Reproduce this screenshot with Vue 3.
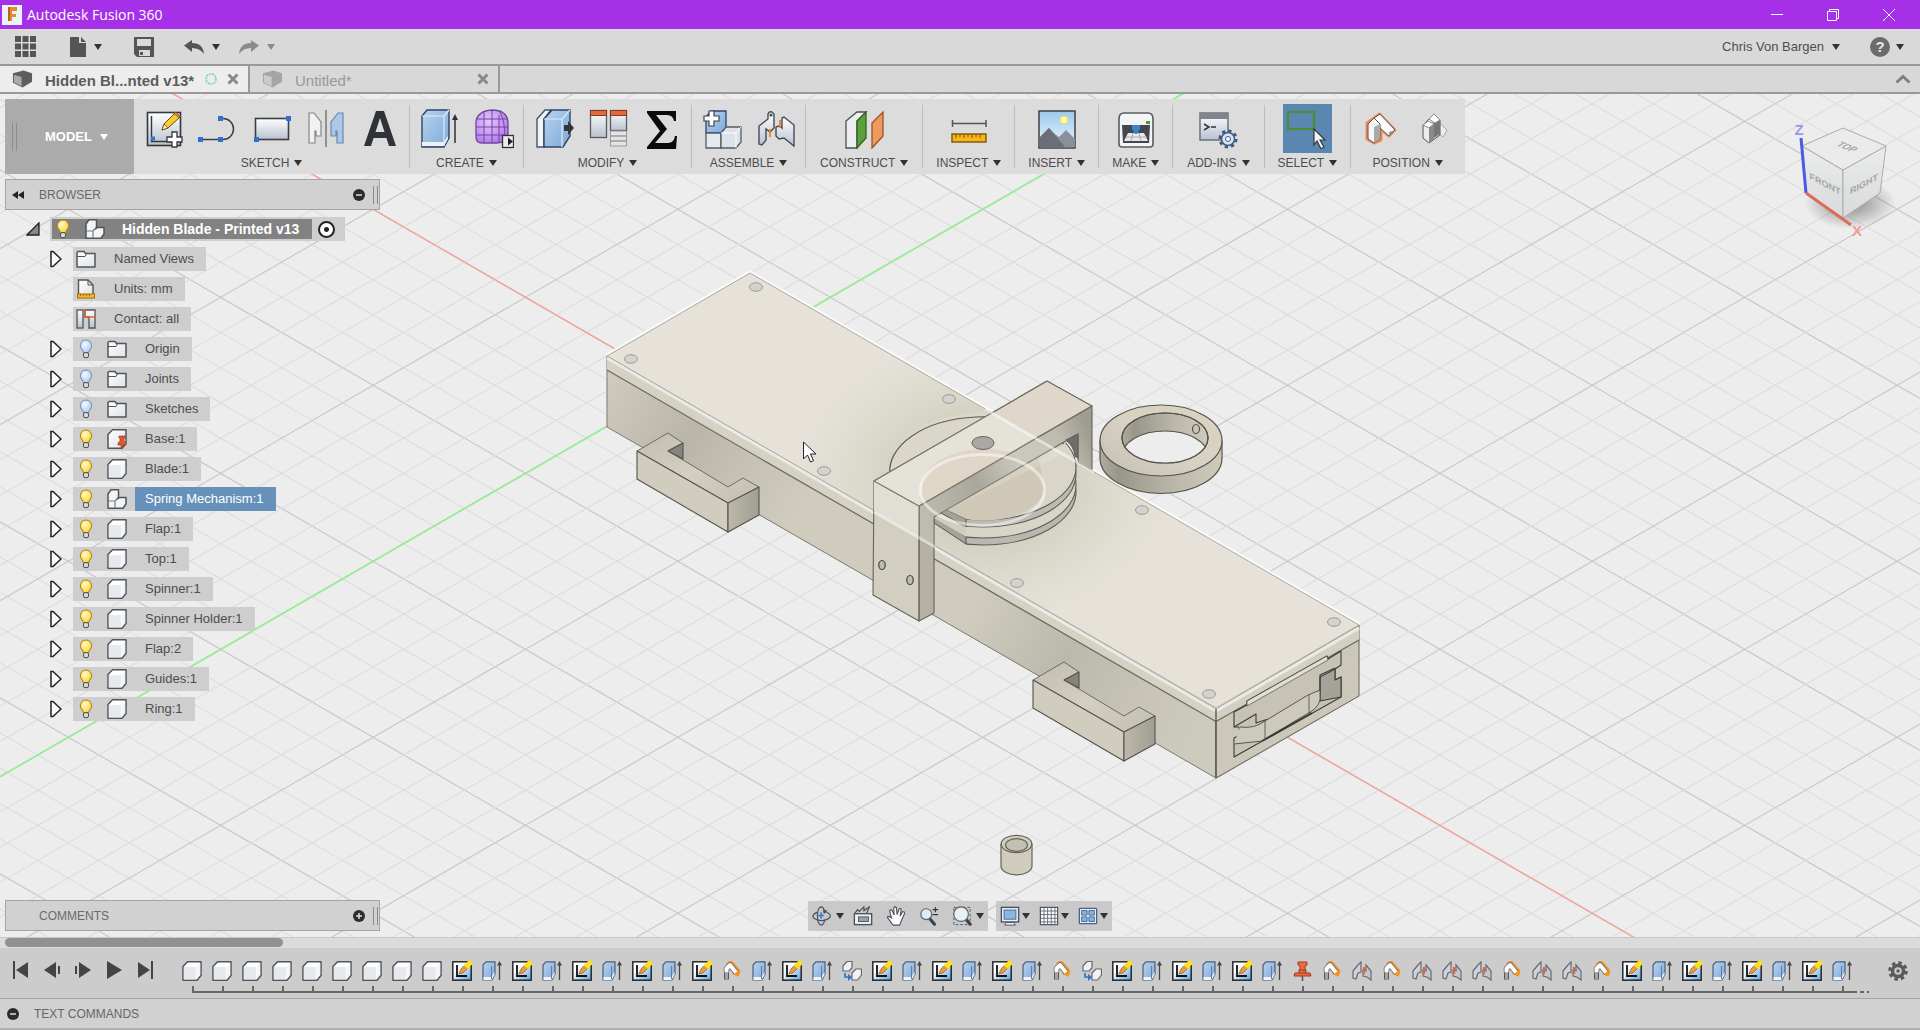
<script setup>
const groups = [
  { label: 'SKETCH', icons: ['sketch', 'line', 'rect', 'mirror', 'text'] },
  { label: 'CREATE', icons: ['extrude', 'form'] },
  { label: 'MODIFY', icons: ['presspull', 'params', 'sigma'] },
  { label: 'ASSEMBLE', icons: ['component', 'joint'] },
  { label: 'CONSTRUCT', icons: ['plane'], roomy: true },
  { label: 'INSPECT', icons: ['measure'] },
  { label: 'INSERT', icons: ['picture'] },
  { label: 'MAKE', icons: ['printer'] },
  { label: 'ADD-INS', icons: ['addins'], roomy: true },
  { label: 'SELECT', icons: ['select'], active: true },
  { label: 'POSITION', icons: ['capture', 'revert'] },
]

const tree = [
  { name: 'Named Views', icon: 'folder', arrow: true },
  { name: 'Units: mm', icon: 'units' },
  { name: 'Contact: all', icon: 'contact' },
  { name: 'Origin', icon: 'folder', arrow: true, bulb: 'off' },
  { name: 'Joints', icon: 'folder', arrow: true, bulb: 'off' },
  { name: 'Sketches', icon: 'folder', arrow: true, bulb: 'off' },
  { name: 'Base:1', icon: 'pinned', arrow: true, bulb: 'on' },
  { name: 'Blade:1', icon: 'body', arrow: true, bulb: 'on' },
  { name: 'Spring Mechanism:1', icon: 'assembly', arrow: true, bulb: 'on', selected: true },
  { name: 'Flap:1', icon: 'body', arrow: true, bulb: 'on' },
  { name: 'Top:1', icon: 'body', arrow: true, bulb: 'on' },
  { name: 'Spinner:1', icon: 'body', arrow: true, bulb: 'on' },
  { name: 'Spinner Holder:1', icon: 'body', arrow: true, bulb: 'on' },
  { name: 'Flap:2', icon: 'body', arrow: true, bulb: 'on' },
  { name: 'Guides:1', icon: 'body', arrow: true, bulb: 'on' },
  { name: 'Ring:1', icon: 'body', arrow: true, bulb: 'on' },
]

const featureIcons = { B: 'body', S: 't-sketch', E: 't-extrude', J: 't-joint', M: 't-move', A: 't-asbuilt', P: 't-pin' }
const features = [...'BBBBBBBBBSESESESESJESEMSESESEJMSESESEPJAJAAAJAAJSESESESE'].map((k) => featureIcons[k])

const playback = [
  { id: 'first', label: 'Go to start' },
  { id: 'prev', label: 'Step back' },
  { id: 'next', label: 'Step forward' },
  { id: 'play', label: 'Play' },
  { id: 'last', label: 'Go to end' },
]

const navTools = [
  [
    { id: 'orbit', menu: true },
    { id: 'lookat' },
    { id: 'pan' },
    { id: 'zoom' },
    { id: 'fit', menu: true },
  ],
  [
    { id: 'display', menu: true },
    { id: 'gridset', menu: true },
    { id: 'views', menu: true },
  ],
]

// Ground grid: two line families at 30 degrees, every fifth line is a major one.
const slope = 88 / 152.4
const pitch = 35.2
const x0 = 220.7
const y0 = 297.3
function family(sign) {
  const lines = []
  for (let n = -50; n <= 60; n++) {
    const y = y0 + n * pitch
    lines.push({
      major: n % 5 === 0,
      n,
      y1: y - sign * slope * x0,
      y2: y + sign * slope * (1920 - x0),
    })
  }
  return lines
}
const down = family(1)
const up = family(-1)
const gridLines = [...down, ...up]
const redAxis = down.find((l) => l.n === -5)
const greenAxis = up.find((l) => l.n === 10)

const screws = [
  [756, 287], [631, 359], [949, 399], [824, 471],
  [1142, 510], [1017, 583], [1334, 622], [1209, 694],
]
</script>

<template>
  <div class="app">
    <svg class="defs" width="0" height="0" aria-hidden="true">
      <defs>
        <linearGradient id="gBlue" x1="0" y1="0" x2="1" y2="1">
          <stop offset="0" stop-color="#b9d3ee" /><stop offset="1" stop-color="#7ea9d8" />
        </linearGradient>
        <linearGradient id="gGrey" x1="0" y1="0" x2="0" y2="1">
          <stop offset="0" stop-color="#fff" /><stop offset="1" stop-color="#b9c2cf" />
        </linearGradient>
        <linearGradient id="gBody" x1="0" y1="0" x2="1" y2="1">
          <stop offset="0" stop-color="#fff" /><stop offset="1" stop-color="#dfe2e6" />
        </linearGradient>
        <linearGradient id="gSky" x1="0" y1="0" x2="0" y2="1">
          <stop offset="0" stop-color="#9cc8ec" /><stop offset="1" stop-color="#eef6fb" />
        </linearGradient>
        <linearGradient id="gSheet" x1="0" y1="0" x2="1" y2="1">
          <stop offset="0.3" stop-color="#fff" /><stop offset="1" stop-color="#5ea1e0" />
        </linearGradient>
        <radialGradient id="gPurple" cx="0.4" cy="0.35" r="0.7">
          <stop offset="0" stop-color="#e6c6ff" /><stop offset="1" stop-color="#b377ef" />
        </radialGradient>
        <radialGradient id="gOn" cx="0.4" cy="0.35" r="0.7">
          <stop offset="0" stop-color="#fffbd0" /><stop offset="1" stop-color="#f8d52c" />
        </radialGradient>
        <radialGradient id="gOff" cx="0.4" cy="0.35" r="0.7">
          <stop offset="0" stop-color="#f4faff" /><stop offset="1" stop-color="#a9c8f0" />
        </radialGradient>
      </defs>

      <!-- toolbar, 40 x 40 -->
      <symbol id="sketch" viewBox="0 0 40 40">
        <rect x="3.5" y="3.5" width="33" height="33" fill="url(#gGrey)" stroke="#34383e" stroke-width="1.6" />
        <path d="M7.500 7V32.500H32" fill="none" stroke="#34383e" stroke-width="1.400" />
        <rect x="7" y="27.500" width="4" height="4" fill="#2f74d0" />
        <path d="M18 21l2-6L31 4l5 4L24 19z" fill="#ffc928" stroke="#5b4a1e" />
        <path d="M18 21l2-6 4 4z" fill="#f6e7c4" stroke="#5b4a1e" stroke-width=".7" />
        <path d="M30 4.500l1.500-1.500 5 4-1.500 1.700z" fill="#ef8a3c" stroke="#5b4a1e" stroke-width=".7" />
        <path d="M28 23h5v5h5v5h-5v5h-5v-5h-5v-5h5z" fill="#fff" stroke="#34383e" stroke-width="1.300" />
      </symbol>
      <symbol id="line" viewBox="0 0 40 40">
        <path d="M3 30.500H25A10.500 10.500 0 0 0 25 9.500H23" fill="none" stroke="#3b3f45" stroke-width="1.500" />
        <g fill="#2f6fd2"><rect x="0" y="28" width="5" height="5" /><rect x="20" y="28" width="5" height="5" /><rect x="20" y="7" width="5" height="5" /></g>
      </symbol>
      <symbol id="rect" viewBox="0 0 40 40">
        <rect x="3.500" y="9.500" width="33" height="21" fill="url(#gGrey)" stroke="#3b3f45" stroke-width="1.600" />
        <g fill="#2f6fd2"><rect x="2" y="28" width="5" height="5" /><rect x="34" y="7" width="5" height="5" /></g>
      </symbol>
      <symbol id="mirror" viewBox="0 0 40 40">
        <path d="M20 1V38" stroke="#777" stroke-width="1.500" />
        <path d="M3 4h5l7 9v14h-5v-5H9v12H3z" fill="#f1f1f1" stroke="#858585" stroke-width="1.200" />
        <path d="M37 4h-5l-7 9v14h5v-5h1v12h6z" fill="#a9c8ea" stroke="#6e88a8" stroke-width="1.200" />
      </symbol>
      <symbol id="text" viewBox="0 0 40 40">
        <path d="M4 37L16 2h8l12 35h-7l-2.600-8H13.600L11 37zM15.500 23h9L20 9z" fill="#2f3237" />
      </symbol>
      <symbol id="extrude" viewBox="0 0 40 40">
        <path d="M2 7l5-6h22v28l-5 9H2z" fill="url(#gBlue)" stroke="#2c4568" stroke-width="1.400" />
        <path d="M2 33h22l4-6v3l-4 7H2z" fill="#eef2f6" />
        <path d="M2 7h22v30M24 7l5-6" fill="none" stroke="#dcebfa" stroke-width="1.200" />
        <path d="M35 34V8" stroke="#2e3238" stroke-width="1.500" /><path d="M35 5l3 6h-6z" fill="#2e3238" />
      </symbol>
      <symbol id="form" viewBox="0 0 40 40">
        <path d="M2 12Q4 2 18 1Q32 1 34 12V28Q31 34 22 34H8Q2 34 2 28z" fill="url(#gPurple)" stroke="#71479c" stroke-width="1.300" />
        <path d="M10 4V34M18 1V33M25 6V33M2 18H34M2 26H33M3 10H33M26 3Q31 12 31 30" fill="none" stroke="#71479c" />
        <rect x="28.500" y="26.500" width="11" height="12" fill="#ececec" stroke="#333" stroke-width="1.300" />
        <path d="M30 32.500h4v-4l5 4-5 4v-4" fill="#222" />
      </symbol>
      <symbol id="presspull" viewBox="0 0 40 40">
        <path d="M3 10l8-9h6L10 10V38H3z" fill="#f1f3f5" stroke="#43546b" stroke-width="1.400" />
        <path d="M10 10l8-9h18v26l-7 11H10z" fill="url(#gBlue)" stroke="#2c4568" stroke-width="1.400" />
        <path d="M10 10h18v28M28 10l8-9" fill="none" stroke="#dcebfa" stroke-width="1.200" />
        <path d="M30 16h4v-4l6 7-6 7v-4h-4z" fill="#33363b" />
      </symbol>
      <symbol id="params" viewBox="0 0 40 40">
        <rect x="2.500" y="1.500" width="16" height="27" fill="url(#gGrey)" stroke="#555b64" stroke-width="1.300" />
        <rect x="22.500" y="1.500" width="16" height="20" fill="url(#gGrey)" stroke="#555b64" stroke-width="1.300" />
        <path d="M2.500 1.500h16v5h-16zM22.500 1.500h16v5h-16z" fill="#e4683a" stroke="#8c3a1b" />
        <path d="M22.500 22h16v5h-16zM22.500 27h16v5h-16zM22.500 32h16v5h-16z" fill="#e3e3e3" stroke="#999" />
      </symbol>
      <symbol id="sigma" viewBox="0 0 40 40">
        <path d="M5 2H34V12H32Q31 6 25 6H14L25 20L13 34H26Q32 34 33 27H35L34 40H5V38L18 22L5 4z" fill="#0b0b0b" />
      </symbol>
      <symbol id="component" viewBox="0 0 40 40">
        <path d="M4 8l5-6h15v17l-5 5H4z" fill="url(#gBlue)" stroke="#2c4568" stroke-width="1.300" />
        <path d="M4 24h15v15H4z" fill="#e6e9ee" stroke="#555b66" stroke-width="1.300" />
        <path d="M19 24l5-6h15v15l-5 6H19z" fill="#dde1e8" stroke="#555b66" stroke-width="1.300" />
        <path d="M19 24h15v15M34 24l5-6" fill="none" stroke="#fff" />
        <path d="M7 2h5v5h5v5h-5v5H7v-5H2V7h5z" fill="#fff" stroke="#3c4350" stroke-width="1.200" />
      </symbol>
      <symbol id="joint" viewBox="0 0 40 40">
        <path d="M3 17l9-7V5q1-3 4-2l2 2v14l-4 4-4-3v11l-4 5-3-1z" fill="url(#gGrey)" stroke="#454b54" stroke-width="1.400" />
        <path d="M26 19V9l2-1 10 8v21l-10-8-5 1-3-3V18q3-2 6 1z" fill="url(#gGrey)" stroke="#454b54" stroke-width="1.400" />
        <circle cx="15" cy="6" r="1.600" fill="#454b54" />
        <path d="M14 20v8M24 11v8" stroke="#ef8025" stroke-width="1.800" />
      </symbol>
      <symbol id="plane" viewBox="0 0 40 40">
        <path d="M2 12L13 3h9L13 12V39H2z" fill="#eceef0" stroke="#4a4f57" stroke-width="1.300" />
        <path d="M13 12l9-9V29l-9 10z" fill="#5aa03c" stroke="#35611f" stroke-width="1.300" />
        <path d="M28 14L39 3V27L28 39z" fill="#f0995c" stroke="#9a5324" stroke-width="1.300" />
      </symbol>
      <symbol id="measure" viewBox="0 0 40 40">
        <path d="M3 14.500H37M3.500 11v7M37 11v7" fill="none" stroke="#555" stroke-width="1.500" />
        <rect x="3" y="25" width="34" height="8" fill="#f7b51c" stroke="#7c5606" stroke-width="1.400" />
        <path d="M7 25v4M11 25v3M15 25v4M19 25v3M23 25v4M27 25v3M31 25v4" stroke="#7c5606" />
      </symbol>
      <symbol id="picture" viewBox="0 0 40 40">
        <rect x="2" y="2" width="36" height="37" fill="url(#gSky)" stroke="#3d4248" stroke-width="1.500" />
        <circle cx="27" cy="11" r="4" fill="#fbf8b0" stroke="#e5d955" />
        <path d="M3 28l9-9 6 6 4 3 7-7 9 9v8H3z" fill="#8a8f9a" />
        <path d="M3 28l9-9 16 19H3z" fill="#696e79" />
      </symbol>
      <symbol id="printer" viewBox="0 0 40 40">
        <path d="M3 10q0-6 5-6H32q5 0 5 6V35q0 3-3 3H6q-3 0-3-3z" fill="#f3f4f5" stroke="#585c62" stroke-width="1.600" />
        <path d="M6 16H34L33 34H7z" fill="#42464d" />
        <path d="M12 24H28L32 32H8z" fill="#e8e8e8" /><path d="M17 24l-2 8M23 24l2 8M10 28h21" stroke="#aaa" />
        <path d="M16 16h8v4l-3 5h-2l-3-5z" fill="#3f80c8" /><rect x="30" y="12" width="4" height="3" fill="#4c9b2c" />
      </symbol>
      <symbol id="addins" viewBox="0 0 40 40">
        <rect x="2" y="4" width="28" height="27" fill="url(#gGrey)" stroke="#666b72" stroke-width="1.400" />
        <rect x="2" y="4" width="28" height="6" fill="#7e858d" />
        <path d="M6 15l5 3-5 3M13 18h5" fill="none" stroke="#333" stroke-width="1.500" />
        <circle cx="30" cy="30" r="6.500" fill="#dbe5f2" stroke="#3b5a86" stroke-width="1.500" />
        <circle cx="30" cy="30" r="8" fill="none" stroke="#3b5a86" stroke-width="3" stroke-dasharray="3.200 3.080" />
        <circle cx="30" cy="30" r="2.500" fill="#fff" stroke="#3b5a86" />
      </symbol>
      <symbol id="select" viewBox="0 0 40 40">
        <rect x="1" y="3" width="26" height="17" fill="none" stroke="#4a8f2e" stroke-width="2.200" />
        <path d="M27 20l11 11h-5l4 7-3 2-4-8-3 4z" fill="#f4f4f4" stroke="#2e3742" stroke-width="1.200" />
      </symbol>
      <symbol id="capture" viewBox="0 0 40 40">
        <path d="M6 14L18.500 5L34 21L28 27L20 20V31L13 34L6 30z" fill="none" stroke="#f08a52" stroke-width="3" stroke-linejoin="round" />
        <path d="M13 9l6-4L34 21l-6 6L19 19z" fill="#fafafa" stroke="#555" />
        <path d="M7 15l6-6 6 6v15l-6 4-6-4z" fill="#f6f6f6" stroke="#555" />
        <path d="M13 18l6-3v15l-6 4z" fill="#a9a9a9" /><path d="M28 23l6-2-6 6z" fill="#999" />
      </symbol>
      <symbol id="revert" viewBox="0 0 40 40">
        <path d="M18 8l14 13-4 7-9-7z" fill="#eee" stroke="#aaa" />
        <path d="M8 16L19 5l6 6v15L14 34l-6-5z" fill="#ececec" stroke="#555" />
        <path d="M14 18l5-5v17l-5 4z" fill="#8a8a8a" /><path d="M19 13l6-3v15l-6 4z" fill="#777" />
        <path d="M8 16l5-4 6 3-5 4zM14 10l5-5 6 6-5 3z" fill="#fff" stroke="#888" />
      </symbol>

      <!-- browser and timeline, 20 x 20 -->
      <symbol id="body" viewBox="0 0 20 20">
        <path d="M1 5.500L5.500 .8H19V14.500L15 19.200H1z" fill="#fff" stroke="#50545b" stroke-width="1.500" stroke-linejoin="round" />
        <path d="M1.800 6H14V18.400H1.800z" fill="#e6eaee" /><path d="M14.500 6V18L18.200 14V2z" fill="#f3f4f6" />
      </symbol>
      <symbol id="assembly" viewBox="0 0 20 20">
        <path d="M1 5L4 .8h7.500V8l-1 2 2-1.500H19V15l-3 4.200H1z" fill="#f3f4f6" stroke="#50545b" stroke-width="1.500" stroke-linejoin="round" />
        <path d="M8 19V12l3-3.500M1.500 12H8" fill="none" stroke="#777c84" stroke-width="1.200" />
      </symbol>
      <symbol id="pinned" viewBox="0 0 20 20">
        <path d="M1 5.500L5.500 .8H19V14.500L15 19.200H1z" fill="url(#gBody)" stroke="#50545b" stroke-width="1.500" stroke-linejoin="round" />
        <path d="M12 7h6v2h-1v3l2 2v2h-3v3h-2v-3h-3v-2l2-2V9h-1z" fill="#e2572b" stroke="#8e2d10" stroke-width=".6" />
      </symbol>
      <symbol id="folder" viewBox="0 0 20 20">
        <path d="M1 18V3.500L2 2.500H8l1.500 2H19V18z" fill="url(#gBody)" stroke="#50545b" stroke-width="1.500" stroke-linejoin="round" />
        <path d="M1 7.500h8l1.500-2.500" fill="none" stroke="#50545b" />
      </symbol>
      <symbol id="units" viewBox="0 0 20 20">
        <path d="M2.500 16V1H12l5 5V16z" fill="url(#gBody)" stroke="#50545b" stroke-width="1.400" /><path d="M12 1v5h5" fill="none" stroke="#50545b" />
        <rect x="1.500" y="15" width="17" height="4" fill="#f9b822" stroke="#a3690b" />
        <path d="M4.500 15v2M7.500 15v2M10.500 15v2M13.500 15v2" stroke="#a3690b" />
      </symbol>
      <symbol id="contact" viewBox="0 0 20 20">
        <rect x="1" y="1" width="6" height="18" fill="url(#gGrey)" stroke="#50545b" stroke-width="1.300" />
        <path d="M9 1h10v18h-6V8H9z" fill="url(#gGrey)" stroke="#50545b" stroke-width="1.300" />
        <path d="M9 0V8H20" fill="none" stroke="#f05d31" stroke-width="1.500" />
      </symbol>
      <symbol id="bulb-on" viewBox="0 0 20 20">
        <path d="M10 1a5.700 5.700 0 0 1 4 9.600l-1.500 3H7.500l-1.500-3A5.700 5.700 0 0 1 10 1z" fill="url(#gOn)" stroke="#b98a1d" stroke-width="1.100" />
        <rect x="7.500" y="13.600" width="5" height="5" rx="1.500" fill="#d8dadd" stroke="#4b4f55" />
      </symbol>
      <symbol id="bulb-off" viewBox="0 0 20 20">
        <path d="M10 1a5.700 5.700 0 0 1 4 9.600l-1.500 3H7.500l-1.500-3A5.700 5.700 0 0 1 10 1z" fill="url(#gOff)" stroke="#7d98bd" stroke-width="1.100" />
        <rect x="7.500" y="13.600" width="5" height="5" rx="1.500" fill="#d8dadd" stroke="#4b4f55" />
      </symbol>
      <symbol id="t-sketch" viewBox="0 0 20 20">
        <rect x=".8" y=".8" width="18.400" height="18.400" fill="url(#gSheet)" stroke="#26292e" stroke-width="1.500" />
        <path d="M5 4V15H15" fill="none" stroke="#111" stroke-width="1.800" />
        <path d="M7 13l2-5 8-8 4 2-10 10z" fill="#e99a3e" stroke="#6a4313" stroke-width=".5" />
        <path d="M12 4.500L17 -1l5 2-6 7z" fill="#ffe11a" />
      </symbol>
      <symbol id="t-extrude" viewBox="0 0 20 20">
        <path d="M1 4l3-3.200h9V13l-3 6H1z" fill="url(#gBlue)" stroke="#4a607e" stroke-width="1.200" />
        <path d="M1.500 16h8l3-5v3l-3 5h-8z" fill="#f2f5f8" /><path d="M9.500 5v13" stroke="#5c7da8" />
        <path d="M17.500 19V3" stroke="#44474c" stroke-width="1.300" /><path d="M17.500 0l2.500 4.500h-5z" fill="#44474c" />
      </symbol>
      <symbol id="t-joint" viewBox="0 0 20 20">
        <g fill="none" stroke-linejoin="round">
          <path d="M6 5L8.500 3L15 10.500L13.500 14.500" stroke="#f39322" stroke-width="6.500" />
          <path d="M4.500 11V7.500L8 4L14 11.500" stroke="#666" stroke-width="5.500" />
          <path d="M4.500 9V18.500" stroke="#555" stroke-width="5" />
          <path d="M4.500 12V18" stroke="#a5a5a5" stroke-width="3" />
          <path d="M4.500 11.500V7.500L8 4L14 11.500" stroke="#fff" stroke-width="4" />
        </g>
      </symbol>
      <symbol id="t-move" viewBox="0 0 20 20">
        <path d="M1 5l4-4.500h5V7l-3 3H1zM10 12l4-4h5.500v6l-4 5H10z" fill="#f0f1f3" stroke="#666" stroke-width="1.200" />
        <path d="M3 12v4h4" fill="none" stroke="#2c75cf" stroke-width="1.700" /><path d="M6 13l4 3-4 4z" fill="#2c75cf" />
      </symbol>
      <symbol id="t-asbuilt" viewBox="0 0 20 20">
        <path d="M1 10l5-6 3-3v10l-3 1-2 6-3-1z" fill="#cfd2d8" stroke="#666b74" stroke-width="1.200" />
        <path d="M14 4l5 6v9l-4-3-4-1V9l3 1z" fill="#c3c7ce" stroke="#666b74" stroke-width="1.200" />
        <path d="M12 6v7" stroke="#e8632a" stroke-width="2" />
      </symbol>
      <symbol id="t-pin" viewBox="0 0 20 20">
        <path d="M6 1h9v3l-2 1v3l1 1v3h4l1 3H2l1-3h4V9l1-1V5L6 4z" fill="#e56a48" stroke="#a33a1b" /><path d="M7 9h7M7 12h7" stroke="#a33a1b" /><path d="M10.500 15v5" stroke="#555" stroke-width="1.500" />
      </symbol>

      <!-- playback, 18 x 18 -->
      <symbol id="first" viewBox="0 0 18 18"><path d="M2 0v18" stroke="#444" stroke-width="2" /><path d="M16 1v16L4 9z" fill="#444" /></symbol>
      <symbol id="prev" viewBox="0 0 18 18"><path d="M13 1v16L1 9z" fill="#444" /><path d="M16 5v8" stroke="#444" stroke-width="2" /></symbol>
      <symbol id="next" viewBox="0 0 18 18"><path d="M5 1v16L17 9z" fill="#444" /><path d="M2 5v8" stroke="#444" stroke-width="2" /></symbol>
      <symbol id="play" viewBox="0 0 18 18"><path d="M2 0v18L17 9z" fill="#444" /></symbol>
      <symbol id="last" viewBox="0 0 18 18"><path d="M2 1v16L14 9z" fill="#444" /><path d="M16 0v18" stroke="#444" stroke-width="2" /></symbol>

      <!-- navigation bar, 22 x 22 -->
      <symbol id="orbit" viewBox="0 0 22 22">
        <path d="M14 7Q13 1 10 1Q6 2 6 11Q6 20 10 21Q13 21 14 15" fill="none" stroke="#4a5260" stroke-width="1.300" />
        <path d="M14 6Q21 8 20 12Q17 16 10 16Q1 15 1 11Q2 8 6 7" fill="none" stroke="#4a5260" stroke-width="1.300" />
        <path d="M12 4l5 1-4 4z" fill="#4a5260" /><path d="M10 7v7M7 10.500h6" stroke="#2f78d0" stroke-width="1.600" />
      </symbol>
      <symbol id="lookat" viewBox="0 0 22 22">
        <path d="M2 8l3-4 2 2 5-5v4l6-4-3 7" fill="none" stroke="#4a5260" stroke-width="1.300" />
        <rect x="1.500" y="8.500" width="19" height="12" fill="#eef0f3" stroke="#4a5260" stroke-width="1.500" /><rect x="6" y="12" width="11" height="5" fill="#9ba0aa" stroke="#4a5260" />
      </symbol>
      <symbol id="pan" viewBox="0 0 22 22">
        <path d="M7 20L1.500 12.500Q2 10 6 13L4 5.500Q5 3 7 5.500L9 10 8.500 2Q10 0 11.500 2l.7 7.500L14.500 3q2-1 2.200 1L15.500 11l3-5q2 0 2 2L17 16l-2 5H8z" fill="#fcfcfc" stroke="#4a5260" stroke-width="1.200" />
      </symbol>
      <symbol id="zoom" viewBox="0 0 22 22">
        <path d="M11 13l6 7" stroke="#3c4249" stroke-width="3.500" stroke-linecap="round" />
        <circle cx="8" cy="9" r="6" fill="#dcebf6" stroke="#5d6672" stroke-width="1.300" /><path d="M15 4h6M18 1v6M15 9.500h6" stroke="#333" stroke-width="1.200" />
      </symbol>
      <symbol id="fit" viewBox="0 0 22 22">
        <rect x="2" y="1.500" width="18" height="19" fill="none" stroke="#555" stroke-dasharray="3 2" />
        <path d="M15 14l5 6" stroke="#3c4249" stroke-width="3.500" stroke-linecap="round" /><circle cx="10" cy="9" r="8" fill="#e6f0f5" stroke="#5d6672" stroke-width="1.300" />
      </symbol>
      <symbol id="display" viewBox="0 0 22 22">
        <path d="M7 18h8l2 3H5z" fill="#eee" stroke="#4a5260" /><rect x="1.500" y="1.500" width="19" height="16" fill="#eceff3" stroke="#4a5260" stroke-width="1.500" />
        <rect x="4.500" y="4.500" width="13" height="10" fill="#8db5e2" stroke="#44668f" />
      </symbol>
      <symbol id="gridset" viewBox="0 0 22 22">
        <rect x="1.500" y="1.500" width="19" height="19" fill="#fff" stroke="#4a5260" stroke-width="1.300" />
        <path d="M5.500 2v19M9.500 2v19M13.500 2v19M17.500 2v19M2 5.500h19M2 9.500h19M2 13.500h19M2 17.500h19" stroke="#616976" />
      </symbol>
      <symbol id="views" viewBox="0 0 22 22">
        <rect x="1.500" y="2.500" width="19" height="17" rx="1" fill="#e8eef5" stroke="#46618a" stroke-width="1.400" />
        <path d="M4 5h6v5H4zM12 5h6v5h-6zM4 12h6v5H4zM12 12h6v5h-6z" fill="#8db5e2" stroke="#46618a" />
      </symbol>

      <!-- document cube, 22 x 20 -->
      <symbol id="doc-dark" viewBox="0 0 22 20"><path d="M1 4L12 1l9 3v9l-10 6L1 14z" fill="#5d5d5d" /><path d="M2 5.500l8 2.500v9.500L2 13.500z" fill="#a9a9a9" /></symbol>
      <symbol id="doc-light" viewBox="0 0 22 20"><path d="M1 4L12 1l9 3v9l-10 6L1 14z" fill="#a5a5a5" /><path d="M2 5.500l8 2.500v9.500L2 13.500z" fill="#cbcbcb" /></symbol>
      <symbol id="close" viewBox="0 0 12 12"><path d="M1.500 1.500l9 9M10.500 1.500l-9 9" stroke="#8a8a8a" stroke-width="3" /></symbol>
    </svg>

    <header class="titlebar">
      <svg class="logo" viewBox="0 0 20 20" aria-hidden="true">
        <rect width="20" height="20" fill="#e9f4f8" /><path d="M6 2h9v4h-5v3h4v3h-4v4H6z" fill="#e58a2d" /><path d="M6 2h2v14H6z" fill="#b9651a" />
      </svg>
      <span class="title">Autodesk Fusion 360</span>
      <div class="winbuttons">
        <button aria-label="Minimize"><svg viewBox="0 0 12 12"><path d="M0 5.500h12" stroke="#fff" /></svg></button>
        <button aria-label="Restore"><svg viewBox="0 0 12 12"><path d="M.5 2.500h9v9h-9zM2.500 2.500v-2h9v9h-2" fill="none" stroke="#fff" /></svg></button>
        <button aria-label="Close"><svg viewBox="0 0 12 12"><path d="M0 0l12 12M12 0L0 12" stroke="#fff" /></svg></button>
      </div>
    </header>

    <div class="appbar">
      <button class="gridbtn" aria-label="Data panel"><svg width="21" height="21" viewBox="0 0 21 21"><path d="M0 0h6v6H0zM7.500 0h6v6h-6zM15 0h6v6h-6zM0 7.500h6v6H0zM7.500 7.500h6v6h-6zM15 7.500h6v6h-6zM0 15h6v6H0zM7.500 15h6v6h-6zM15 15h6v6h-6z" fill="#555" /></svg></button>
      <button aria-label="File"><svg width="16" height="20" viewBox="0 0 16 20"><path d="M0 0h9v6h7v14H0zM11 0l5 5h-5z" fill="#555" /></svg><i class="caret"></i></button>
      <button aria-label="Save"><svg width="20" height="20" viewBox="0 0 20 20"><path d="M0 0h20v20H3l-3-3zM3 2v7h14V2zM5 13v6h11v-6z" fill="#555" fill-rule="evenodd" /><path d="M6 15h3v3H6z" fill="#555" /></svg></button>
      <div class="history">
        <button aria-label="Undo"><svg width="20" height="14" viewBox="0 0 20 14"><path d="M0 5.500L8 0v3q11 0 12 11-4-6-12-6v4z" fill="#555" /></svg><i class="caret"></i></button>
        <button aria-label="Redo" class="disabled"><svg width="20" height="14" viewBox="0 0 20 14"><path d="M20 5.500L12 0v3Q1 3 0 14q4-6 12-6v4z" fill="#8b8b8b" /></svg><i class="caret"></i></button>
      </div>
      <button class="user">Chris Von Bargen<i class="caret"></i></button>
      <button class="help" aria-label="Help"><span class="qmark">?</span><i class="caret"></i></button>
    </div>

    <nav class="tabs">
      <div class="tab active">
        <svg class="doc"><use href="#doc-dark" /></svg>
        <a href="#">Hidden Bl...nted v13*</a>
        <svg class="sync" viewBox="0 0 14 14"><circle cx="7" cy="7" r="5" fill="none" stroke="#63d0c4" stroke-width="1.500" stroke-dasharray="2 1" /></svg>
        <button aria-label="Close tab"><svg width="12" height="12"><use href="#close" /></svg></button>
      </div>
      <div class="tab">
        <svg class="doc"><use href="#doc-light" /></svg>
        <a href="#">Untitled*</a>
        <button aria-label="Close tab"><svg width="12" height="12"><use href="#close" /></svg></button>
      </div>
      <button class="collapse" aria-label="Collapse toolbar"><svg width="16" height="10" viewBox="0 0 16 10"><path d="M1.500 8.500L8 2.500l6.500 6" fill="none" stroke="#808080" stroke-width="3" /></svg></button>
    </nav>

    <main class="viewport">
      <svg class="scene" viewBox="0 94 1920 843" preserveAspectRatio="xMidYMid slice" aria-label="Model view">
        <defs>
          <radialGradient id="plateShade" gradientUnits="userSpaceOnUse" cx="983" cy="490" r="210" gradientTransform="translate(983 480) scale(1 .75) translate(-983 -490)">
            <stop offset="0.400" stop-color="#d3d1c2" /><stop offset="0.600" stop-color="#dcdacd" /><stop offset="0.900" stop-color="#e6e2da" />
          </radialGradient>
          <linearGradient id="side" gradientUnits="userSpaceOnUse" x1="607" y1="370" x2="1216" y2="720">
            <stop offset="0" stop-color="#cfccbe" /><stop offset="0.150" stop-color="#b9b6a9" /><stop offset="0.230" stop-color="#c4c1b4" /><stop offset="0.340" stop-color="#cfcbbd" />
            <stop offset="0.620" stop-color="#cfccbf" /><stop offset="0.770" stop-color="#bbb8ac" /><stop offset="0.900" stop-color="#c8c5b8" /><stop offset="1" stop-color="#cdcabe" />
          </linearGradient>
          <linearGradient id="beam" gradientUnits="userSpaceOnUse" x1="920" y1="520" x2="1092" y2="440">
            <stop offset="0" stop-color="#b5b1a4" /><stop offset="0.350" stop-color="#9b988c" /><stop offset="0.600" stop-color="#c2bfb2" /><stop offset="0.850" stop-color="#bfbbae" /><stop offset="1" stop-color="#9f9c91" />
          </linearGradient>
          <linearGradient id="wall" x1="0" y1="0" x2="1" y2="0">
            <stop offset="0" stop-color="#aeab9f" /><stop offset="0.150" stop-color="#98958a" /><stop offset="0.600" stop-color="#bab7aa" /><stop offset="1" stop-color="#cfcbbb" />
          </linearGradient>
          <linearGradient id="ringTop" x1="0" y1="1" x2="1" y2="0">
            <stop offset="0" stop-color="#c3bfb0" /><stop offset="0.500" stop-color="#d8d2c3" /><stop offset="1" stop-color="#d9d2c3" />
          </linearGradient>
          <linearGradient id="gripTop" x1="0" y1="0" x2="1" y2="1">
            <stop offset="0" stop-color="#c0bdae" /><stop offset="0.500" stop-color="#d3d0c1" /><stop offset="1" stop-color="#c2bfb0" />
          </linearGradient>
          <linearGradient id="gripEnd" x1="0" y1="0" x2="1" y2="0">
            <stop offset="0" stop-color="#bcb9ab" /><stop offset="1" stop-color="#a09d92" />
          </linearGradient>
          <clipPath id="ringBore"><ellipse cx="1165" cy="438" rx="43" ry="25" /></clipPath>
          <clipPath id="plateClip"><path d="M750 273L607 356L1216 709L1359 625z" /></clipPath>
          <clipPath id="rim"><path d="M945 509L966 519V546H1082V440L1078 436L934 517z" /></clipPath>
        </defs>
        <rect y="94" width="1920" height="843" fill="#ededed" />
        <g fill="none" stroke-width="1.200">
          <line v-for="(l, i) in gridLines" :key="i" x1="0" x2="1920" :y1="l.y1" :y2="l.y2" :stroke="l.major ? '#c9c9c9' : '#dedede'" />
          <line x1="0" x2="1920" :y1="redAxis.y1" :y2="redAxis.y2" stroke="#f5a5a0" stroke-width="1.500" />
          <line x1="0" x2="1920" :y1="greenAxis.y1" :y2="greenAxis.y2" stroke="#94ee92" stroke-width="1.700" />
        </g>

        <!-- housing -->
        <g stroke-linejoin="round">
          <path d="M607 356L750 273L1359 625" fill="none" stroke="#fafafa" stroke-width="5" />
          <path d="M607 356V427L1216 778V709z" fill="url(#side)" stroke="#7b796f" />
          <path d="M1216 709V778L1359 696V625z" fill="#cbc8ba" stroke="#65635b" />
          <path d="M750 273L607 356L1216 709L1359 625z" fill="url(#plateShade)" stroke="#aaa89d" />
          <path d="M607 357L1216 710V721L607 370z" fill="#d5d2c4" />
          <path d="M1216 710L1359 627V639L1216 721z" fill="#d3d0c2" />
          <path d="M607 370L1216 721.500L1359 640" fill="none" stroke="#6a685f" stroke-width="1.200" />
          <path d="M607 358L1216 711L1359 628" fill="none" stroke="#ebeae6" stroke-width="3" />
          <path d="M607 356L1216 708L1359 625" fill="none" stroke="#b3b1a8" />
          <path d="M1216 709V778" stroke="#5b5952" stroke-width="1.400" />
        </g>

        <!-- blade slot -->
        <g stroke="#3c3b37" stroke-width="1.100" stroke-linejoin="round">
          <path d="M1234 712L1247 705L1247 701L1327 656L1328 659L1341 651V665L1335 669V680L1341 677V697L1234 757V738L1240 735L1239 727H1234z" fill="#c6c3b5" />
          <path d="M1320 677L1335 669V680L1341 677V697L1320 701z" fill="#a5a398" />
          <path d="M1247 701L1327 656L1328 660L1247 706z" fill="#e1ded3" stroke-width=".6" />
          <path d="M1234 727L1256 714V723L1265 720Q1282 716 1300 703L1320 691V675L1335 668" fill="none" />
          <path d="M1240 727Q1254 729 1265 721L1308 695L1320 690V700Q1318 709 1305 715L1262 741L1234 744" fill="#cdc9bb" stroke-width=".8" />
          <path d="M1265 721V738M1309 695V713" fill="none" stroke-width=".7" />
          <path d="M1262 741L1312 713" stroke-width="2" />
        </g>

        <!-- grips -->
        <g v-for="(t, i) in [[0, 0], [396, 229]]" :key="'g' + i" :transform="`translate(${t[0]} ${t[1]})`" stroke="#55534c" stroke-width="1.100" stroke-linejoin="round">
          <path d="M637 451L668 433L683 443L668 451L728 487L743 478L759 487L728 503z" fill="url(#gripTop)" stroke-width=".8" />
          <path d="M683 443V459L668 451z" fill="#85837a" />
          <path d="M637 451L728 503V532L637 479z" fill="#d0cdbe" />
          <path d="M728 503L759 487V515L728 532z" fill="url(#gripEnd)" />
        </g>

        <g v-for="(s, i) in screws" :key="'s' + i">
          <ellipse :cx="s[0]" :cy="s[1]" rx="6.500" ry="4.300" fill="#d3d2ce" stroke="#9b9a95" />
        </g>

        <!-- spinner -->
        <g stroke-linejoin="round">
          <path d="M890 467A93 54 0 0 1 1076 467V492A93 54 0 0 1 966 544L890 500z" fill="#dad7ca" />
          <path d="M890 475A93 54 0 0 1 1076 467" fill="none" stroke="#5d5b54" stroke-width="1.200" />
          <g clip-path="url(#rim)" stroke="#5d5b54" stroke-width="1.100">
            <ellipse cx="983" cy="492" rx="93" ry="53" fill="#b8b7b2" />
            <ellipse cx="983" cy="485" rx="93" ry="53" fill="#d8d5c8" />
            <ellipse cx="983" cy="474" rx="93" ry="53" fill="#bcbab3" />
            <ellipse cx="983" cy="467" rx="93" ry="53" fill="#d9d6c9" />
          </g>
          <path d="M945 509L966 519V527L934 509zM934 516L966 537V544L934 523z" fill="#a4a299" stroke="#55534c" />
          <path d="M934 512L966 527V537L934 518z" fill="#cfccc0" />
          <path d="M1045 490A62 36 0 0 1 966 519L945 509L1038 455z" fill="#cfc8b7" />
        </g>

        <!-- spinner holder -->
        <g stroke="#65635b" stroke-width="1.100" stroke-linejoin="round">
          <path d="M919 506L1092 406V470L1078 462V434L934 517V613L919 621z" fill="url(#beam)" />
          <path d="M1066 440L1078 434V458L1075 456Q1074 446 1066 440z" fill="#6e6d68" />
          <path d="M874 481L1047 381L1092 406L919 506z" fill="#dfd8ca" />
          <path d="M874 481L919 506V621L873 595z" fill="#d2cfc1" />
        </g>
        <g clip-path="url(#plateClip)">
          <path d="M874 481L1047 381L1092 406L919 506z" fill="#e5e2d9" />
          <path d="M874 481L919 506V621L873 595z" fill="#e0dfd6" />
          <path d="M919 506L1092 406V440L934 517V560L919 552z" fill="#fff" fill-opacity=".15" />
        </g>
        <path d="M922 485A62 36 0 0 1 1012 453L920 505Z" fill="#dfd6c8" />
        <path d="M874 481L919 506L1092 406M874 481L1047 381M919 506V621" fill="none" stroke="#77756c" stroke-width="1.100" />
        <ellipse cx="983" cy="443" rx="11" ry="6.500" fill="#a9a8a4" stroke="#66645e" />
        <g fill="#bfbcb0" stroke="#45443e" stroke-width="1.200"><ellipse cx="882" cy="565" rx="3.200" ry="4.500" /><ellipse cx="910" cy="580" rx="3.200" ry="4.500" /></g>
        <ellipse cx="982.500" cy="490" rx="62" ry="35.500" fill="none" stroke="#fff" stroke-opacity=".5" stroke-width="3" />
        <path d="M985 409L1094 472M874 512L935 547" fill="none" stroke="#fff" stroke-opacity=".5" stroke-width="3" />

        <!-- ring -->
        <g stroke="#55534c" stroke-width="1.200">
          <path d="M1100 441V458A61 35.500 0 0 0 1222 458V441z" fill="url(#wall)" />
          <ellipse cx="1161" cy="440.500" rx="61" ry="35.500" fill="url(#ringTop)" />
          <ellipse cx="1165" cy="438" rx="43" ry="25" fill="url(#wall)" />
          <g clip-path="url(#ringBore)"><ellipse cx="1165" cy="456" rx="43" ry="25" fill="#ededed" /></g>
          <ellipse cx="1165" cy="438" rx="43" ry="25" fill="none" />
          <ellipse cx="1196" cy="429" rx="3.500" ry="4.500" fill="none" />
        </g>

        <!-- bushing -->
        <g stroke="#66645c" stroke-width="1.200">
          <path d="M1001 844V866A15.300 8.700 0 0 0 1032 866V844z" fill="#d0cdbf" />
          <ellipse cx="1016.500" cy="844" rx="15.300" ry="8.700" fill="#d2cfc1" /><ellipse cx="1016.500" cy="845" rx="11" ry="6.300" fill="#c4c1b4" />
        </g>

        <path d="M803.500 442v17l4-4 3 7 3-1.300-3-6.700h5.500z" fill="#fff" stroke="#222" />
      </svg>

      <svg class="viewcube" viewBox="1785 115 120 130" aria-label="View cube">
        <defs>
          <radialGradient id="cubeShadow"><stop offset="0.300" stop-color="#000" stop-opacity=".3" /><stop offset="1" stop-color="#000" stop-opacity="0" /></radialGradient>
          <linearGradient id="cubeFace" x1="0" y1="0" x2="0" y2="1"><stop offset="0" stop-color="#ebecec" /><stop offset="1" stop-color="#d8dadb" /></linearGradient>
        </defs>
        <ellipse cx="1850" cy="203" rx="46" ry="26" fill="url(#cubeShadow)" />
        <g stroke="#a9abad" stroke-linejoin="round">
          <path d="M1802 146L1843 170V218L1806 193z" fill="url(#cubeFace)" /><path d="M1843 170L1886 146L1880 193L1843 218z" fill="url(#cubeFace)" />
          <path d="M1843 128L1886 146L1843 170L1802 146z" fill="#ebebec" />
        </g>
        <g class="face" text-anchor="middle">
          <text transform="translate(1825 187) skewY(28)">FRONT</text>
          <text transform="translate(1864 187) skewY(-28)">RIGHT</text>
          <text transform="translate(1844 149) rotate(22) skewX(-35)">TOP</text>
        </g>
        <path d="M1801 138L1806 193" stroke="#4a5be8" stroke-width="3" /><path d="M1806 193L1851 225" stroke="#dc6c5c" stroke-width="3" />
        <g class="axis" text-anchor="middle"><text x="1799" y="135" fill="#9798ee">Z</text><text x="1857" y="236" fill="#f29a92">X</text></g>
      </svg>

      <div class="toolbar">
        <button class="workspace"><i class="grip"></i><span>MODEL</span><i class="caret white"></i></button>
        <div v-for="g in groups" :key="g.label" class="group">
          <div class="icons">
            <button v-for="ic in g.icons" :key="ic" :aria-label="ic" :class="{ active: g.active }"><svg width="40" height="40"><use :href="'#' + ic" /></svg></button>
          </div>
          <button class="grouplabel" :class="{ roomy: g.roomy }">{{ g.label }}<i class="caret"></i></button>
        </div>
      </div>

      <section class="panel">
        <button class="rewind" aria-label="Collapse browser"><svg width="12" height="8" viewBox="0 0 12 8"><path d="M6 0v8L0 4zM12 0v8L6 4z" fill="#222" /></svg></button>
        <span>BROWSER</span>
        <button class="dot" aria-label="Hide browser"><svg width="12" height="12" viewBox="0 0 12 12"><circle cx="6" cy="6" r="6" fill="#2c2c2c" /><path d="M3 6h6" stroke="#ddd" stroke-width="1.500" /></svg></button>
        <i class="grip"></i>
      </section>

      <ul class="tree">
        <li class="root">
          <button class="open" aria-label="Collapse"><svg width="14" height="14" viewBox="0 0 14 14"><path d="M13 .8V13H1z" fill="#888" stroke="#222" stroke-width="1.300" /></svg></button>
          <div class="rootchip">
            <div class="rootname">
              <svg width="20" height="20"><use href="#bulb-on" /></svg>
              <svg width="20" height="20"><use href="#assembly" /></svg>
              <label for="activate">Hidden Blade - Printed v13</label>
            </div>
            <input id="activate" type="radio" name="active" checked />
          </div>
        </li>
        <li v-for="n in tree" :key="n.name">
          <button v-if="n.arrow" class="arrow" :aria-label="'Expand ' + n.name"><svg width="12" height="18" viewBox="0 0 12 18"><path d="M1 1.500h2L11 9l-8 7.500H1z" fill="#fafafa" stroke="#222" stroke-width="1.500" /></svg></button>
          <span v-else class="arrow"></span>
          <div class="chip">
            <span v-if="n.bulb" class="cell"><svg width="20" height="20"><use :href="'#bulb-' + n.bulb" /></svg></span>
            <span class="cell"><svg width="20" height="20"><use :href="'#' + n.icon" /></svg></span>
            <span class="name" :class="{ selected: n.selected }">{{ n.name }}</span>
          </div>
        </li>
      </ul>

      <div class="bottomrow">
        <section class="panel comments">
          <span>COMMENTS</span>
          <button class="dot" aria-label="Show comments"><svg width="12" height="12" viewBox="0 0 12 12"><circle cx="6" cy="6" r="6" fill="#2c2c2c" /><path d="M3 6h6M6 3v6" stroke="#ddd" stroke-width="1.500" /></svg></button>
          <i class="grip"></i>
        </section>
        <div class="navbar">
          <div v-for="(set, i) in navTools" :key="i" class="navset">
            <button v-for="t in set" :key="t.id" :aria-label="t.id"><svg width="20" height="20"><use :href="'#' + t.id" /></svg><i v-if="t.menu" class="caret"></i></button>
          </div>
        </div>
      </div>
    </main>

    <footer>
      <div class="scrolltrack"><div class="thumb"></div></div>
      <div class="timeline">
        <div class="playback">
          <button v-for="p in playback" :key="p.id" :aria-label="p.label"><svg width="18" height="18"><use :href="'#' + p.id" /></svg></button>
        </div>
        <div class="features">
          <button v-for="(f, i) in features" :key="i" class="feature" :aria-label="'Feature ' + (i + 1)"><svg width="20" height="20"><use :href="'#' + f" /></svg></button>
          <i class="tail"></i>
        </div>
        <button class="gear" aria-label="Timeline settings">
          <svg width="20" height="20" viewBox="0 0 20 20"><circle cx="10" cy="10" r="5.500" fill="none" stroke="#5a5a5a" stroke-width="3.500" /><circle cx="10" cy="10" r="8.300" fill="none" stroke="#5a5a5a" stroke-width="3" stroke-dasharray="3.500 3.020" /><circle cx="10" cy="10" r="1.700" fill="#5a5a5a" /></svg>
        </button>
      </div>
      <div class="textcommands">
        <button class="dot" aria-label="Hide text commands"><svg width="12" height="12" viewBox="0 0 12 12"><circle cx="6" cy="6" r="6" fill="#2c2c2c" /><path d="M3 6h6" stroke="#ddd" stroke-width="1.500" /></svg></button>
        <span>TEXT COMMANDS</span>
      </div>
    </footer>
  </div>
</template>

<style>
body {
  margin: 0;
  background: #ededed;
}
</style>

<style scoped>
.app {
  display: flex;
  flex-direction: column;
  min-height: 100vh;
  font: 13px/16px "Liberation Sans", Arial, sans-serif;
  color: #4d4d4d;
}
.defs {
  position: absolute;
}
svg {
  display: block;
  flex: none;
}
button {
  display: flex;
  align-items: center;
  margin: 0;
  padding: 0;
  border: 0;
  background: none;
  font: inherit;
  color: inherit;
}
.caret {
  flex: none;
  width: 0;
  height: 0;
  border: 4px solid transparent;
  border-top: 6px solid #333;
  border-bottom: 0;
}
.caret.white {
  border-top-color: #fff;
}
.disabled .caret {
  border-top-color: #8b8b8b;
}

.titlebar {
  display: flex;
  align-items: center;
  height: 29px;
  padding-left: 2px;
  background: #a62fe8;
  color: #fff;
}
.logo {
  width: 20px;
  height: 20px;
}
.title {
  margin-left: 5px;
  font: 14px/20px "Open Sans", "Noto Sans", sans-serif;
}
.winbuttons {
  display: flex;
  margin-left: auto;
  padding-right: 3px;
}
.winbuttons button {
  justify-content: center;
  width: 56px;
  height: 29px;
}
.winbuttons svg {
  width: 12px;
  height: 12px;
}

.appbar {
  display: flex;
  align-items: center;
  gap: 32px;
  height: 35px;
  padding: 0 16px 0 15px;
  border-bottom: 2px solid #999;
  background: #d9d9d9;
}
.appbar button {
  gap: 8px;
}
.appbar .gridbtn {
  width: 23px;
}
.history {
  display: flex;
  gap: 19px;
  margin-left: -2px;
}
.user {
  margin-left: auto;
}
.appbar .help {
  margin-left: -2px;
  gap: 6px;
}
.qmark {
  width: 20px;
  height: 20px;
  border-radius: 50%;
  background: #6b6b6b;
  color: #e8e8e8;
  font-weight: bold;
  font-size: 15px;
  line-height: 20px;
}

.tabs {
  display: flex;
  align-items: stretch;
  height: 26px;
  border-bottom: 2px solid #999;
  background: #d8d8d8;
}
.tab {
  display: flex;
  align-items: center;
  box-sizing: border-box;
  width: 250px;
  padding: 0 9px 0 12px;
  border-right: 2px solid #999;
  font-size: 15px;
  line-height: 18px;
}
.tab.active {
  background: #ededed;
  font-weight: bold;
}
.tab a {
  flex: 1;
  margin-left: 12px;
  padding-top: 4px;
  color: #999;
  text-decoration: none;
  white-space: nowrap;
}
.tab.active a {
  color: #5c5c5c;
}
.doc {
  width: 21px;
  height: 20px;
}
.sync {
  width: 14px;
  height: 14px;
  margin-right: 9px;
}
.collapse {
  margin: 0 9px 0 auto;
}

.viewport {
  position: relative;
  display: flex;
  flex: 1;
  flex-direction: column;
  overflow: hidden;
}
.scene {
  position: absolute;
  inset: 0;
  width: 100%;
  height: 100%;
}
.viewcube {
  position: absolute;
  top: 21px;
  right: 15px;
  width: 120px;
  height: 130px;
}
.face {
  font-size: 9px;
  font-weight: bold;
  fill: #a3a5a7;
}
.axis {
  font-size: 15px;
  font-weight: bold;
}

.toolbar {
  position: relative;
  display: flex;
  align-self: flex-start;
  height: 75px;
  margin: 5px 0 0 5px;
  background: #dcdcdc;
}
.workspace {
  width: 129px;
  gap: 8px;
  padding-left: 7px;
  background: #ababab;
  color: #fff;
  font-weight: bold;
}
.workspace .grip {
  height: 28px;
  margin-right: 20px;
  border-color: #8d8d8d;
}
.grip {
  flex: none;
  width: 3px;
  height: 18px;
  border: solid #8a8a8a;
  border-width: 0 1px;
}
.group {
  position: relative;
  display: flex;
  flex-direction: column;
  align-items: center;
  padding: 5px 6px 0 5px;
}
.group:not(:last-child)::after {
  content: "";
  position: absolute;
  top: 6px;
  right: 0;
  bottom: 6px;
  width: 1px;
  background: #bdbdbd;
}
.icons {
  display: flex;
  gap: 5px;
}
.icons button {
  justify-content: center;
  width: 49px;
  height: 49px;
}
.icons button.active {
  background: #5987b1;
}
.grouplabel {
  gap: 5px;
  margin: 2px 8px 0;
  font-size: 12px;
}
.grouplabel.roomy {
  margin: 2px 9px 0;
}

.panel {
  position: relative;
  display: flex;
  align-items: center;
  box-sizing: border-box;
  width: 375px;
  height: 31px;
  margin: 5px 0 0 5px;
  padding: 0 1px 0 6px;
  border: 1px solid #a4a4a4;
  background: #d1d1d1;
  color: #6a6a6a;
  font-size: 12px;
}
.panel > span {
  margin-left: 15px;
}
.panel .dot {
  margin: 0 8px 0 auto;
}
.comments {
  margin: 0;
  padding-left: 18px;
}

.tree {
  position: relative;
  display: flex;
  flex-direction: column;
  gap: 6px;
  margin: 7px 0 0;
  padding: 0;
  list-style: none;
}
.tree li {
  display: flex;
  align-items: center;
  height: 24px;
  padding-left: 50px;
}
.tree .root {
  padding-left: 26px;
}
.open {
  width: 24px;
}
.rootchip {
  display: flex;
  align-items: center;
  height: 24px;
  padding: 0 8px 0 2px;
  background: #cdcecd;
}
.rootname {
  display: flex;
  align-items: center;
  height: 20px;
  padding: 0 13px 0 1px;
  background: #828282;
  color: #fff;
  font-size: 14px;
  font-weight: bold;
}
.rootname svg + svg {
  margin: 0 17px 0 12px;
}
.rootchip input {
  appearance: none;
  box-sizing: border-box;
  width: 17px;
  height: 17px;
  margin: 0 2px 0 6px;
  border: 2px solid #222;
  border-radius: 50%;
  background: radial-gradient(circle, #222 2px, #fff 3px);
}
.arrow {
  width: 23px;
}
.chip {
  display: flex;
  height: 24px;
  background: #cdcecd;
}
.cell {
  display: flex;
  align-items: center;
  box-sizing: border-box;
  width: 31px;
  padding-left: 3px;
}
.name {
  padding: 0 12px 0 10px;
  line-height: 24px;
}
.name.selected {
  background: #6591bb;
  color: #fff;
}

.bottomrow {
  position: relative;
  display: grid;
  grid-template-columns: 1fr auto 1fr;
  align-items: center;
  margin: auto 0 0;
  padding: 0 5px 6px;
}
.navbar {
  display: flex;
  gap: 8px;
}
.navset {
  display: flex;
  align-items: center;
  gap: 13px;
  height: 30px;
  padding: 0 4px;
  background: #c9c9c9;
}
.navset button {
  gap: 4px;
}
.navset:first-child button:first-child {
  margin-right: -4px;
}
.navset:last-child {
  gap: 9px;
}
.navset:last-child button {
  gap: 2px;
}

.scrolltrack {
  height: 10px;
  padding: 0 5px;
  border-top: 1px solid #c8c8c8;
  background: #dbdbdb;
}
.thumb {
  width: 278px;
  height: 9px;
  border-radius: 5px;
  background: #919191;
}
.timeline {
  display: flex;
  height: 50px;
  border-bottom: 1px solid #a4a4a4;
  background: #cccccc;
}
.playback {
  display: flex;
  gap: 13px;
  align-items: center;
  box-sizing: border-box;
  width: 170px;
  height: 43px;
  padding-left: 12px;
}
.features {
  display: flex;
  margin-left: 7px;
}
.feature {
  position: relative;
  align-items: flex-start;
  justify-content: center;
  box-sizing: border-box;
  width: 30px;
  height: 45px;
  padding-top: 13px;
}
.feature::before {
  content: "";
  position: absolute;
  left: 0;
  right: 0;
  bottom: 0;
  height: 2px;
  background: #666;
}
.feature:first-child::before {
  left: 15px;
}
.feature::after {
  content: "";
  position: absolute;
  bottom: 2px;
  left: 15px;
  width: 2px;
  height: 5px;
  background: #666;
}
.tail {
  width: 12px;
  height: 2px;
  margin-top: 43px;
  background: repeating-linear-gradient(90deg, transparent 0 3px, #666 3px 7px);
}
.gear {
  height: 45px;
  margin: 0 12px 0 auto;
}
.textcommands {
  display: flex;
  align-items: center;
  box-sizing: border-box;
  height: 31px;
  padding-left: 7px;
  border-bottom: 2px solid #b0b0b0;
  background: #d1d1d1;
  color: #666;
  font-size: 12px;
}
.textcommands span {
  margin-left: 15px;
}
</style>
